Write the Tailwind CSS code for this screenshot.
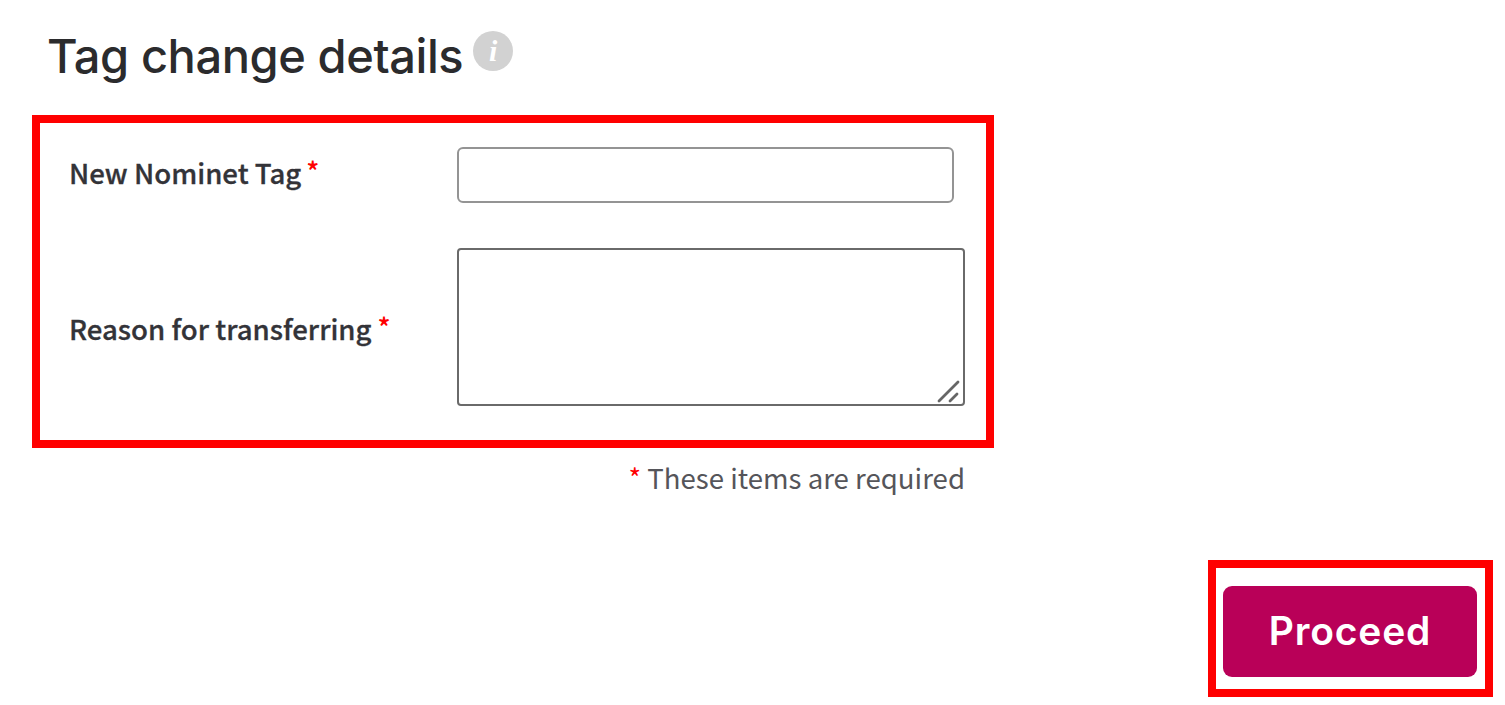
<!DOCTYPE html>
<html lang="en">
<head>
  <meta charset="UTF-8" />
  <title>Tag change details</title>
  <script src="https://cdn.jsdelivr.net/npm/@tailwindcss/browser@4"></script>
</head>
<body class="bg-white h-[705px] overflow-hidden font-['Noto_Sans_CJK_JP',sans-serif]">
  <div class="flex items-center h-[115px] pl-[47px] pb-[4px] gap-[10px]">
    <h2 class="font-['Inter',sans-serif] font-medium text-[47px] tracking-[-0.42px] text-[#2b2b2d] leading-none">Tag change details</h2>
    <span class="flex items-center justify-center w-[40px] h-[40px] rounded-full bg-[#d2d2d2] text-white font-['Liberation_Serif',serif] italic font-bold text-[30px] leading-none mb-[10px]">i</span>
  </div>

  <form class="w-[962px] h-[333px] ml-[32px] border-[8px] border-[#ff0000]">
    <div class="flex items-start pl-[29px] pt-[24px]">
      <label class="w-[388px] h-[56px] flex items-center text-[27.6px] font-medium [-webkit-text-stroke:0.3px_#333338] text-[#333338] pb-[5px]">New Nominet Tag<span class="text-[#ff0000] [-webkit-text-stroke:0] ml-[5px] mb-[3px] text-[27px]">*</span></label>
      <input class="w-[497px] h-[56px] border-2 border-[#949494] rounded-[6px] bg-white" />
    </div>
    <div class="flex items-center pl-[29px] mt-[45px]">
      <label class="w-[388px] flex items-center text-[27.6px] font-medium [-webkit-text-stroke:0.3px_#333338] text-[#333338] mt-[4px]">Reason for transferring<span class="text-[#ff0000] [-webkit-text-stroke:0] ml-[6px] mb-[3px] text-[27px]">*</span></label>
      <div class="relative w-[508px] h-[158px]">
        <textarea class="block w-full h-full border-2 border-[#6a6a6a] rounded-[4px] bg-white resize-none"></textarea>
        <svg class="absolute right-[2px] bottom-[2px]" width="26" height="26" viewBox="0 0 26 26" fill="none" stroke="#666" stroke-width="2.8" stroke-linecap="round">
          <path d="M2 23 L21 4" />
          <path d="M13 23 L20 16" />
        </svg>
      </div>
    </div>
  </form>

  <p class="w-[965px] text-right text-[27.6px] leading-none text-[#55555a] mt-[16px]"><span class="text-[#ff0000] text-[27px]">*</span> These items are required</p>

  <div class="flex justify-end pr-[12px] mt-[68px]">
    <div class="w-[285px] h-[137px] border-[8px] border-[#ff0000] pl-[7px] pt-[18px]">
      <button class="w-[254px] h-[91px] rounded-[9px] bg-[#b90058] text-white font-['Inter',sans-serif] font-semibold text-[39px] tracking-[0.8px]">Proceed</button>
    </div>
  </div>
</body>
</html>
